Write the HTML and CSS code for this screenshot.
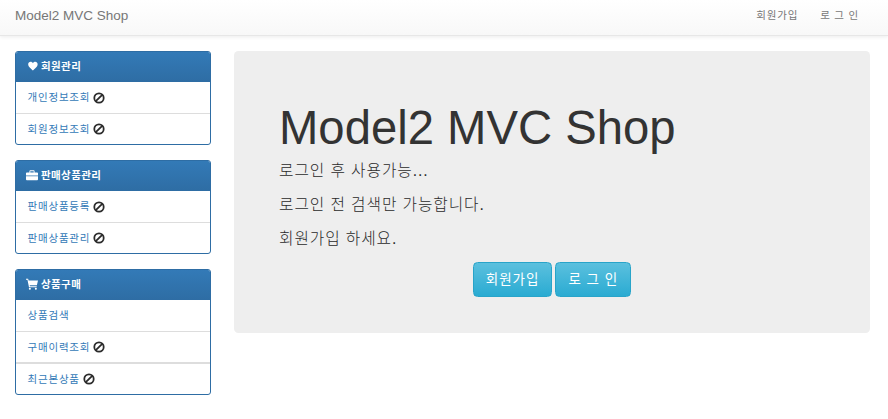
FILE: index.html
```html
<!DOCTYPE html>
<html lang="ko">
<head>
    <meta charset="UTF-8">
    <meta name="viewport" content="width=device-width, initial-scale=1.0">
    <title>Model2 MVC Shop</title>
    <link rel="stylesheet" href="styles.css">
</head>
<body>
    <header class="navbar">
        <a class="brand" href="#">Model2 MVC Shop</a>
        <nav class="nav-links">
            <a href="#">회원가입</a>
            <a href="#">로 그 인</a>
        </nav>
    </header>

    <div class="page">
        <aside class="sidebar">
            <div class="panel">
                <div class="panel-heading">
                    <svg class="icon" viewBox="-2.500 -1.500 16.500 16.500"><path d="M7 13C5 11 .5 8 .5 4.400 .5 2.300 2 1 3.800 1 5.200 1 6.400 1.800 7 3 7.600 1.800 8.800 1 10.200 1 12 1 13.500 2.300 13.500 4.400 13.500 8 9 11 7 13Z"/></svg>
                    회원관리
                </div>
                <ul class="list">
                    <li><a href="#">개인정보조회</a> <svg class="ban" viewBox="0 0 12 12"><circle cx="6" cy="6" r="4.700"/><path d="M2.800 9.200 9.200 2.800"/></svg></li>
                    <li><a href="#">회원정보조회</a> <svg class="ban" viewBox="0 0 12 12"><circle cx="6" cy="6" r="4.700"/><path d="M2.800 9.200 9.200 2.800"/></svg></li>
                </ul>
            </div>

            <div class="panel">
                <div class="panel-heading">
                    <svg class="icon" viewBox="0 0 14 14"><path d="M5 1.500H9Q10 1.500 10 2.500V4H13Q14 4 14 5V7.500H0V5Q0 4 1 4H4V2.500Q4 1.500 5 1.500ZM5 2.500V4H9V2.500ZM0 8.500H14V12Q14 13 13 13H1Q0 13 0 12Z"/></svg>
                    판매상품관리
                </div>
                <ul class="list">
                    <li><a href="#">판매상품등록</a> <svg class="ban" viewBox="0 0 12 12"><circle cx="6" cy="6" r="4.700"/><path d="M2.800 9.200 9.200 2.800"/></svg></li>
                    <li><a href="#">판매상품관리</a> <svg class="ban" viewBox="0 0 12 12"><circle cx="6" cy="6" r="4.700"/><path d="M2.800 9.200 9.200 2.800"/></svg></li>
                </ul>
            </div>

            <div class="panel">
                <div class="panel-heading">
                    <svg class="icon" viewBox="0 0 14 14"><path d="M0 1H2.500L3 3H14L12.700 8.500H4.300L4.600 9.700H12.500V10.800H3.500L1.700 2.100H0Z"/><circle cx="4.500" cy="12.500" r="1.200"/><circle cx="11.500" cy="12.500" r="1.200"/></svg>
                    상품구매
                </div>
                <ul class="list">
                    <li><a href="#">상품검색</a></li>
                    <li><a href="#">구매이력조회</a> <svg class="ban" viewBox="0 0 12 12"><circle cx="6" cy="6" r="4.700"/><path d="M2.800 9.200 9.200 2.800"/></svg></li>
                    <li class="thick"><a href="#">최근본상품</a> <svg class="ban" viewBox="0 0 12 12"><circle cx="6" cy="6" r="4.700"/><path d="M2.800 9.200 9.200 2.800"/></svg></li>
                </ul>
            </div>
        </aside>

        <main class="jumbotron">
            <h1>Model2 MVC Shop</h1>
            <p>로그인 후 사용가능...</p>
            <p>로그인 전 검색만 가능합니다.</p>
            <p>회원가입 하세요.</p>
            <div class="buttons">
                <a class="btn" href="#">회원가입</a>
                <a class="btn" href="#">로 그 인</a>
            </div>
        </main>
    </div>
</body>
</html>
```

FILE: styles.css
```css
body {
    font-family: "Liberation Sans", "Noto Sans CJK KR", sans-serif;
    font-size: 10.5px;
    line-height: 1.42857;
    margin: 0;
    padding: 0;
    background-color: #fff;
    color: #333;
}

a {
    text-decoration: none;
}

.navbar {
    display: flex;
    justify-content: space-between;
    align-items: center;
    box-sizing: border-box;
    height: 36px;
    padding: 0 29px 4px 15px;
    background-image: linear-gradient(to bottom, #fff, #f8f8f8);
    border-bottom: 1px solid #e7e7e7;
    box-shadow: 0 1px 4px rgba(0, 0, 0, 0.08);
}

.brand {
    font-size: 13.5px;
    color: #777;
}

.nav-links {
    display: flex;
    gap: 22px;
}

.nav-links a {
    color: #777;
    letter-spacing: 0.8px;
}

.page {
    display: flex;
    align-items: flex-start;
    gap: 23px;
    padding: 15px 18px 0 15px;
}

.sidebar {
    width: 196px;
    flex-shrink: 0;
}

.panel {
    border: 1px solid #2e6da4;
    border-radius: 3px;
    margin-bottom: 15px;
    overflow: hidden;
}

.panel-heading {
    display: flex;
    align-items: center;
    gap: 3px;
    box-sizing: border-box;
    height: 30px;
    padding: 0 0 2px 10px;
    background-image: linear-gradient(to bottom, #337ab7, #2e6da4);
    color: #fff;
    font-weight: bold;
    letter-spacing: 0.4px;
}

.icon {
    width: 12px;
    height: 12px;
    fill: #fff;
}

.list {
    list-style: none;
    margin: 0;
    padding: 0;
}

.list li {
    display: flex;
    align-items: center;
    gap: 3px;
    height: 30px;
    padding-left: 11.500px;
    border-top: 1px solid #ddd;
}

.list li:first-child {
    border-top: none;
    height: 31px;
}

.list li.thick {
    border-top-width: 2px;
}

.list a {
    color: #337ab7;
    letter-spacing: 0.8px;
}

.ban {
    width: 12px;
    height: 12px;
    fill: none;
    stroke: #2b2b2b;
    stroke-width: 1.800;
}

.jumbotron {
    flex: 1;
    height: 282px;
    box-sizing: border-box;
    padding: 51px 45px 36px;
    background-color: #eee;
    border-radius: 4.500px;
}

.jumbotron h1 {
    margin: 0 0 6.500px;
    font-size: 47.250px;
    font-weight: 500;
    line-height: 1.1;
}

.jumbotron p {
    margin: 0 0 11.500px;
    font-size: 15.750px;
    font-weight: 300;
    color: #2a2a2a;
    letter-spacing: 0.9px;
}

.buttons {
    display: flex;
    justify-content: center;
    gap: 3px;
    margin-top: 11px;
}

.btn {
    box-sizing: border-box;
    height: 35px;
    padding: 8px 12px 6px;
    font-size: 13.500px;
    line-height: 18px;
    color: #fff;
    letter-spacing: 1px;
    background-image: linear-gradient(to bottom, #5bc0de, #2aabd2);
    border: 1px solid #28a4c9;
    border-radius: 4.500px;
}
```
